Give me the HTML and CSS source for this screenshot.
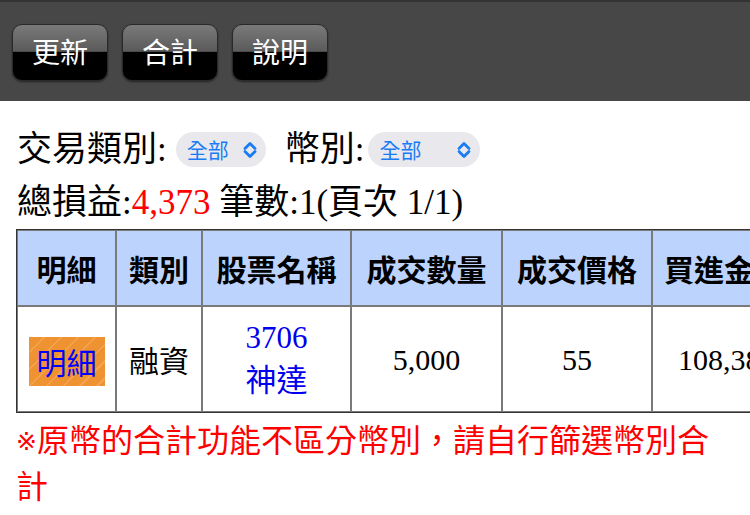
FILE: index.html
```html
<!DOCTYPE html>
<html lang="zh-Hant">
<head>
<meta charset="utf-8">
<title>交易明細</title>
<link rel="stylesheet" href="styles.css">
</head>
<body>
<div class="toolbar">
  <button class="tb-btn">更新</button>
  <button class="tb-btn">合計</button>
  <button class="tb-btn">說明</button>
</div>
<div class="content">
  <div class="filters">
    <span class="label">交易類別:</span>
    <span class="select sel-a"><span class="sel-text">全部</span><svg class="chev" viewBox="0 0 14 18" width="14" height="18"><path d="M2 7.5 L7 2.5 L12 7.5 M2 10.5 L7 15.5 L12 10.5"/></svg></span>
    <span class="label">幣別:</span>
    <span class="select sel-b"><span class="sel-text">全部</span><svg class="chev" viewBox="0 0 14 18" width="14" height="18"><path d="M2 7.5 L7 2.5 L12 7.5 M2 10.5 L7 15.5 L12 10.5"/></svg></span>
  </div>
  <div class="summary">總損益:<span class="red">4,373</span> 筆數:1(頁次 1/1)</div>
  <div class="table-wrap">
  <table class="grid">
    <colgroup>
      <col class="c1"><col class="c2"><col class="c3"><col class="c4"><col class="c5"><col class="c6">
    </colgroup>
    <thead>
      <tr><th>明細</th><th>類別</th><th>股票名稱</th><th>成交數量</th><th>成交價格</th><th>買進金額</th></tr>
    </thead>
    <tbody>
      <tr>
        <td><span class="badge">明細</span></td>
        <td class="sans">融資</td>
        <td class="stock">3706<br>神達</td>
        <td>5,000</td>
        <td>55</td>
        <td>108,389</td>
      </tr>
    </tbody>
  </table>
  </div>
  <p class="note"><span class="mark">※</span>原幣的合計功能不區分幣別，請自行篩選幣別合計</p>
</div>
</body>
</html>
```
FILE: styles.css
```css
html, body {
  margin: 0;
  padding: 0;
  overflow: hidden;
  background: #fff;
}
body {
  font-family: "Liberation Serif", "Noto Sans CJK TC", serif;
  color: #000;
  width: 750px;
}
.toolbar {
  height: 99px;
  border-top: 2px solid #333;
  background: #474747;
  display: flex;
  align-items: center;
  gap: 14px;
  padding-left: 12px;
}
.tb-btn {
  width: 96px;
  height: 57px;
  margin-top: 2px;
  border: 1px solid #2a2a2a;
  border-radius: 10px;
  background: linear-gradient(to bottom, #7a7a7a 0%, #5a5a5a 48%, #000 49%, #000 100%);
  box-shadow: 0 1px 2px rgba(0,0,0,0.5);
  color: #fff;
  font-family: "Noto Sans CJK TC", sans-serif;
  font-size: 28px;
  line-height: 1;
  padding: 0 0 4px;
  display: flex;
  align-items: center;
  justify-content: center;
}
.content {
  padding: 0 16px;
}
.filters {
  margin-top: 22px;
  height: 53px;
  display: flex;
  align-items: center;
  padding-left: 1px;
}
.label {
  font-size: 35px;
  line-height: 53px;
}
.select {
  height: 35px;
  border-radius: 18px;
  background: #e8e8ed;
  display: flex;
  align-items: center;
  justify-content: space-between;
  padding: 0 9px 0 11px;
  box-sizing: border-box;
  margin-left: 9px;
}
.sel-a { width: 90px; margin-right: 19px; }
.sel-b { width: 112px; margin-left: 4px; }
.sel-text {
  font-family: "Noto Sans CJK TC", sans-serif;
  font-size: 21px;
  color: #1a7cf5;
  line-height: 1;
}
.chev {
  display: block;
}
.chev path {
  fill: none;
  stroke: #1a7cf5;
  stroke-width: 2.8;
  stroke-linecap: round;
  stroke-linejoin: round;
}
.summary {
  font-size: 35px;
  line-height: 53px;
  height: 53px;
  padding-left: 1px;
  white-space: nowrap;
}
.red { color: #ff0000; }
.table-wrap {
  width: 734px;
  overflow: hidden;
}
.grid {
  border-collapse: separate;
  border-spacing: 0;
  table-layout: fixed;
  width: 785px;
  border-top: 1px solid #333;
  border-left: 1px solid #333;
  border-bottom: 1px solid #333;
}
.c1 { width: 99px; }
.c2 { width: 86px; }
.c3 { width: 149px; }
.c4 { width: 151px; }
.c5 { width: 150px; }
.c6 { width: 150px; }
.grid th, .grid td {
  border: 1px solid #7a7a7a;
  text-align: center;
  padding: 0;
  white-space: nowrap;
  overflow: hidden;
}
.grid th {
  background: #bcd4fd;
  height: 74px;
  font-family: "Noto Sans CJK TC", sans-serif;
  font-weight: bold;
  font-size: 30px;
}
.grid td {
  height: 104px;
  font-size: 30px;
  line-height: 43px;
}
.grid td.sans {
  font-family: "Noto Sans CJK TC", sans-serif;
}
.grid td.stock {
  color: #0000ee;
  font-size: 31px;
}
.grid th:last-child, .grid td:last-child {
  text-align: left;
  padding-left: 11px;
}
.grid td:last-child {
  padding-left: 25px;
}
.badge {
  display: inline-block;
  width: 76px;
  height: 49px;
  line-height: 49px;
  margin-top: 4px;
  background: repeating-linear-gradient(135deg, #ee9232 0 10px, #f2a451 10px 12px);
  background-color: #ee9232;
  color: #0000ff;
  font-family: "Noto Sans CJK TC", sans-serif;
  font-size: 30px;
  vertical-align: middle;
}
.note {
  margin: 2px 0 0;
  color: #ff0000;
  font-family: "Noto Sans CJK TC", sans-serif;
  font-size: 32px;
  line-height: 46px;
}
.mark {
  font-family: "DejaVu Sans", sans-serif;
  font-size: 25px;
  line-height: 0;
  vertical-align: 2px;
}
```
